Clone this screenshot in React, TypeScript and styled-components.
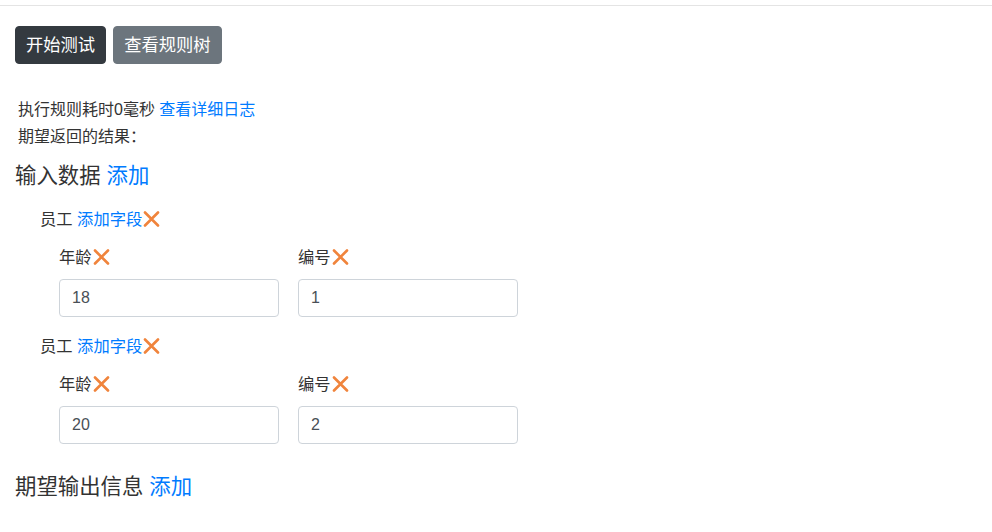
import styled, { createGlobalStyle } from 'styled-components'

const GlobalStyle = createGlobalStyle`
  body {
    margin: 0;
    background: #fff;
    font-family: "Liberation Sans", "Noto Sans CJK SC", sans-serif;
    font-size: 16px;
    color: #333;
  }
`

const TopRule = styled.div`
  height: 5px;
  border-bottom: 1px solid #e4e4e4;
`

const Page = styled.div`
  padding: 20px 15px 40px;
`

const Toolbar = styled.div`
  display: flex;
  gap: 7px;
`

const Button = styled.button<{ $variant: 'dark' | 'secondary' }>`
  height: 38px;
  padding: 0 10px;
  border: 1px solid ${p => (p.$variant === 'dark' ? '#343a40' : '#6c757d')};
  background: ${p => (p.$variant === 'dark' ? '#343a40' : '#6c757d')};
  color: #fff;
  border-radius: 4px;
  font-family: inherit;
  font-size: 17.3px;
  line-height: 24px;
  cursor: pointer;
`

const Info = styled.div`
  margin-top: 32px;
  padding-left: 3px;
`

const InfoLine = styled.div`
  font-size: 16px;
  line-height: 27px;
  color: #333;
`

const Link = styled.a`
  color: #007bff;
  text-decoration: none;
  cursor: pointer;
`

const Heading = styled.div<{ $top: number }>`
  margin-top: ${p => p.$top}px;
  font-size: 21.4px;
  line-height: 25px;
  color: #333;
`

const Entity = styled.div`
  margin-top: 18px;
  padding-left: 25px;
  & + & {
    margin-top: 17px;
  }
`

const EntityHead = styled.div`
  display: flex;
  align-items: center;
  font-size: 16.3px;
  line-height: 24px;
`

const Fields = styled.div`
  display: grid;
  grid-template-columns: 220px 220px;
  column-gap: 19px;
  margin-top: 14px;
  padding-left: 19px;
`

const Field = styled.div`
  display: flex;
  flex-direction: column;
`

const Label = styled.div`
  display: flex;
  align-items: center;
  font-size: 16.3px;
  line-height: 24px;
  margin-bottom: 10px;
`

const Input = styled.input`
  box-sizing: border-box;
  width: 220px;
  height: 38px;
  padding: 6px 12px;
  border: 1px solid #ced4da;
  border-radius: 4px;
  font-family: inherit;
  font-size: 16px;
  color: #495057;
  outline: none;
`

const RemoveIcon = styled.svg`
  width: 17px;
  height: 16px;
  margin-left: 1px;
  cursor: pointer;
`

function Remove() {
  return (
    <RemoveIcon viewBox="0 0 17 16">
      <path d="M2 1.5 L15 14.5 M15 1.5 L2 14.5" stroke="#f0843c" strokeWidth="2.6" strokeLinecap="round" fill="none" />
    </RemoveIcon>
  )
}

const employees = [
  { age: '18', no: '1' },
  { age: '20', no: '2' },
]

function App() {
  return (
    <>
      <GlobalStyle />
      <TopRule />
      <Page>
        <Toolbar>
          <Button $variant="dark">开始测试</Button>
          <Button $variant="secondary">查看规则树</Button>
        </Toolbar>
        <Info>
          <InfoLine>
            执行规则耗时0毫秒 <Link>查看详细日志</Link>
          </InfoLine>
          <InfoLine>期望返回的结果：</InfoLine>
        </Info>
        <Heading $top={14}>
          输入数据 <Link>添加</Link>
        </Heading>
        {employees.map((e, i) => (
          <Entity key={i}>
            <EntityHead>
              员工&nbsp;<Link>添加字段</Link>
              <Remove />
            </EntityHead>
            <Fields>
              <Field>
                <Label>
                  年龄<Remove />
                </Label>
                <Input defaultValue={e.age} />
              </Field>
              <Field>
                <Label>
                  编号<Remove />
                </Label>
                <Input defaultValue={e.no} />
              </Field>
            </Fields>
          </Entity>
        ))}
        <Heading $top={31}>
          期望输出信息 <Link>添加</Link>
        </Heading>
      </Page>
    </>
  )
}

export default App
